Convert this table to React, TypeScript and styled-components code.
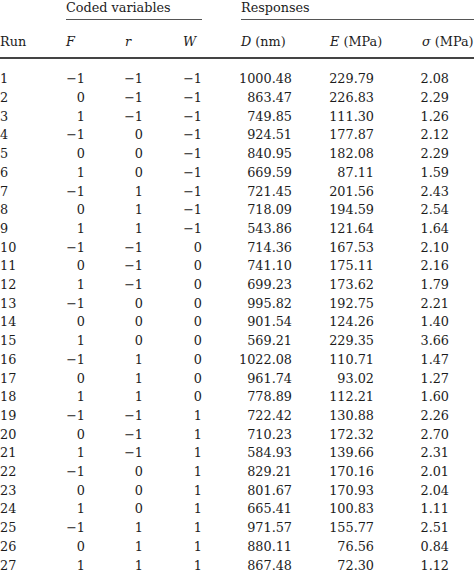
import styled, { createGlobalStyle } from 'styled-components'

const GlobalStyle = createGlobalStyle`
  html, body {
    margin: 0;
    padding: 0;
    background: #fff;
    overflow: hidden;
  }
`

const COLUMNS = '66px 59px 58px 58px 89px 92px 52px'

// right edge of the numbers, measured from the start of their column
const RIGHT_EDGES = [0, 19, 18, 19, 51, 44, 27]

type Row = [string, string, string, string, string, string, string]

const rows: Row[] = [
  ['1', '−1', '−1', '−1', '1000.48', '229.79', '2.08'],
  ['2', '0', '−1', '−1', '863.47', '226.83', '2.29'],
  ['3', '1', '−1', '−1', '749.85', '111.30', '1.26'],
  ['4', '−1', '0', '−1', '924.51', '177.87', '2.12'],
  ['5', '0', '0', '−1', '840.95', '182.08', '2.29'],
  ['6', '1', '0', '−1', '669.59', '87.11', '1.59'],
  ['7', '−1', '1', '−1', '721.45', '201.56', '2.43'],
  ['8', '0', '1', '−1', '718.09', '194.59', '2.54'],
  ['9', '1', '1', '−1', '543.86', '121.64', '1.64'],
  ['10', '−1', '−1', '0', '714.36', '167.53', '2.10'],
  ['11', '0', '−1', '0', '741.10', '175.11', '2.16'],
  ['12', '1', '−1', '0', '699.23', '173.62', '1.79'],
  ['13', '−1', '0', '0', '995.82', '192.75', '2.21'],
  ['14', '0', '0', '0', '901.54', '124.26', '1.40'],
  ['15', '1', '0', '0', '569.21', '229.35', '3.66'],
  ['16', '−1', '1', '0', '1022.08', '110.71', '1.47'],
  ['17', '0', '1', '0', '961.74', '93.02', '1.27'],
  ['18', '1', '1', '0', '778.89', '112.21', '1.60'],
  ['19', '−1', '−1', '1', '722.42', '130.88', '2.26'],
  ['20', '0', '−1', '1', '710.23', '172.32', '2.70'],
  ['21', '1', '−1', '1', '584.93', '139.66', '2.31'],
  ['22', '−1', '0', '1', '829.21', '170.16', '2.01'],
  ['23', '0', '0', '1', '801.67', '170.93', '2.04'],
  ['24', '1', '0', '1', '665.41', '100.83', '1.11'],
  ['25', '−1', '1', '1', '971.57', '155.77', '2.51'],
  ['26', '0', '1', '1', '880.11', '76.56', '0.84'],
  ['27', '1', '1', '1', '867.48', '72.30', '1.12'],
]

const Table = styled.div`
  width: 474px;
  font-family: 'DejaVu Serif', 'Liberation Serif', serif;
  font-size: 12.8px;
  line-height: 18.7px;
  color: #1c1c1c;
`

const GroupRow = styled.div`
  display: grid;
  grid-template-columns: ${COLUMNS};
  line-height: 15px;
`

const GroupTitle = styled.div<{ $start: number; $end: number; $trim?: number }>`
  grid-column: ${(p) => p.$start} / ${(p) => p.$end};
  margin-right: ${(p) => p.$trim ?? 0}px;
  padding-bottom: 4px;
  border-bottom: 1px solid #555;
  white-space: nowrap;
`

const HeadRow = styled.div`
  display: grid;
  grid-template-columns: ${COLUMNS};
  padding-top: 13px;
  padding-bottom: 5px;
  border-bottom: 2px solid #444;
`

const HeadCell = styled.div`
  white-space: nowrap;
`

const Sym = styled.i`
  font-style: italic;
`

const Body = styled.div`
  padding-top: 11.6px;
`

const DataRow = styled.div`
  display: grid;
  grid-template-columns: ${COLUMNS};
`

const Cell = styled.div`
  white-space: nowrap;
`

const Value = styled.div<{ $right: number }>`
  display: flex;
  justify-content: flex-end;
  width: ${(p) => p.$right}px;
`

export default function App() {
  return (
    <>
      <GlobalStyle />
      <Table>
        <GroupRow>
          <GroupTitle $start={2} $end={5} $trim={39}>
            Coded variables
          </GroupTitle>
          <GroupTitle $start={5} $end={8}>
            Responses
          </GroupTitle>
        </GroupRow>
        <HeadRow>
          <HeadCell>Run</HeadCell>
          <HeadCell>
            <Sym>F</Sym>
          </HeadCell>
          <HeadCell>
            <Sym>r</Sym>
          </HeadCell>
          <HeadCell>
            <Sym>W</Sym>
          </HeadCell>
          <HeadCell>
            <Sym>D</Sym> (nm)
          </HeadCell>
          <HeadCell>
            <Sym>E</Sym> (MPa)
          </HeadCell>
          <HeadCell>
            <Sym>σ</Sym> (MPa)
          </HeadCell>
        </HeadRow>
        <Body>
          {rows.map((row) => (
            <DataRow key={row[0]}>
              {row.map((v, i) => (
                <Cell key={i}>
                  {i === 0 ? v : <Value $right={RIGHT_EDGES[i]}><span>{v}</span></Value>}
                </Cell>
              ))}
            </DataRow>
          ))}
        </Body>
      </Table>
    </>
  )
}
